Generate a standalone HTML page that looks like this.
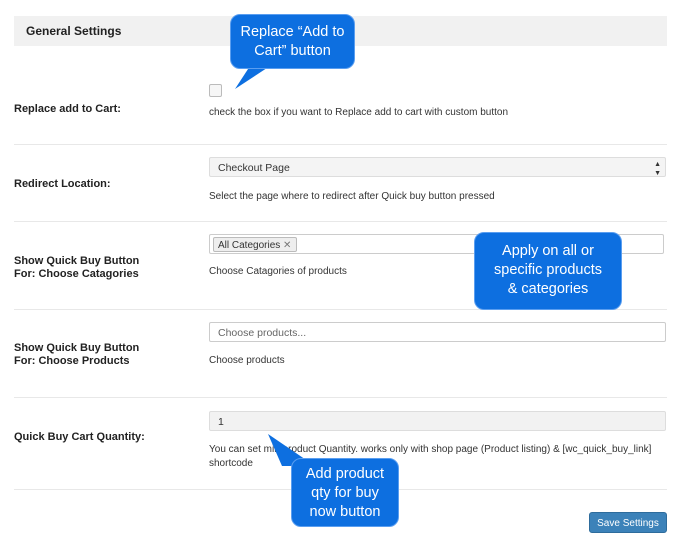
<!DOCTYPE html>
<html><head><style>
body{margin:0;width:685px;height:545px;background:#fff;font-family:"Liberation Sans",sans-serif;position:relative;overflow:hidden;color:#333}
.a{position:absolute}
.lab{position:absolute;left:14px;font-size:11px;font-weight:bold;color:#222;line-height:13px}
.d{position:absolute;left:209px;font-size:10px;color:#333;line-height:14px}
.sep{position:absolute;left:14px;width:653px;height:1px;background:#e8e8e8}
.inp{position:absolute;left:209px;width:455px;height:20px;border:1px solid #ccc;border-radius:2px;font-size:10.5px;line-height:20px;padding-left:8px;box-sizing:border-box}
.bub{position:absolute;background:#0d6fe0;color:#fff;border:1.5px solid #5a9ef0;border-radius:10px;text-align:center;font-size:14.5px;line-height:19px;box-sizing:border-box}
</style></head><body>
<div class="a" style="left:14px;top:16px;width:653px;height:30px;background:#f1f1f1"></div>
<div class="a" style="left:26px;top:24px;font-size:12px;font-weight:bold;color:#222">General Settings</div>

<div class="a" style="left:209px;top:84px;width:11px;height:11px;border:1px solid #bbb;border-radius:2px;background:#f6f6f6"></div>
<div class="lab" style="top:103px">Replace add to Cart:</div>
<div class="d" style="top:106px">check the box if you want to Replace add to cart with custom button</div>
<div class="sep" style="top:144px"></div>

<div class="inp" style="top:157px;width:457px;background:#f4f4f4;border-color:#ddd;color:#333">Checkout Page<span style="position:absolute;right:4px;top:0;font-size:7px;line-height:9px;padding-top:2px">▲<br>▼</span></div>
<div class="lab" style="top:178px">Redirect Location:</div>
<div class="d" style="top:190px">Select the page where to redirect after Quick buy button pressed</div>
<div class="sep" style="top:221px"></div>

<div class="inp" style="top:234px"></div>
<div class="a" style="left:213px;top:237px;width:84px;height:15px;border:1px solid #bbb;border-radius:2px;background:#eee;font-size:10px;line-height:15px;box-sizing:border-box;padding-left:4px">All Categories <span style="color:#777">✕</span></div>
<div class="lab" style="top:255px">Show Quick Buy Button<br>For: Choose Catagories</div>
<div class="d" style="top:265px">Choose Catagories of products</div>
<div class="sep" style="top:309px"></div>

<div class="inp" style="top:322px;width:457px;color:#666">Choose products...</div>
<div class="lab" style="top:342px">Show Quick Buy Button<br>For: Choose Products</div>
<div class="d" style="top:354px">Choose products</div>
<div class="sep" style="top:397px"></div>

<div class="inp" style="top:411px;width:457px;background:#f2f2f2;border-color:#ddd">1</div>
<div class="lab" style="top:431px">Quick Buy Cart Quantity:</div>
<div class="d" style="top:443px">You can set min product Quantity. works only with shop page (Product listing) &amp; [wc_quick_buy_link]<br>shortcode</div>
<div class="sep" style="top:489px"></div>

<div class="a" style="left:589px;top:512px;width:78px;height:21px;background:#3c82b9;border:1px solid #2e6c9c;border-radius:3px;color:#fff;font-size:10px;line-height:21px;text-align:center;box-sizing:border-box">Save Settings</div>

<svg class="a" style="left:0;top:0" width="685" height="545">
<polygon points="250,66 270,66 235,89" fill="#0d6fe0"/>
<polygon points="282,466 315,466 268,434" fill="#0d6fe0"/>
</svg>
<div class="bub" style="left:230px;top:14px;width:125px;height:55px;padding-top:8px">Replace “Add to<br>Cart” button</div>
<div class="bub" style="left:474px;top:232px;width:148px;height:78px;padding-top:9px">Apply on all or<br>specific products<br>&amp; categories</div>
<div class="bub" style="left:291px;top:458px;width:108px;height:69px;padding-top:6px">Add product<br>qty for buy<br>now button</div>
</body></html>
